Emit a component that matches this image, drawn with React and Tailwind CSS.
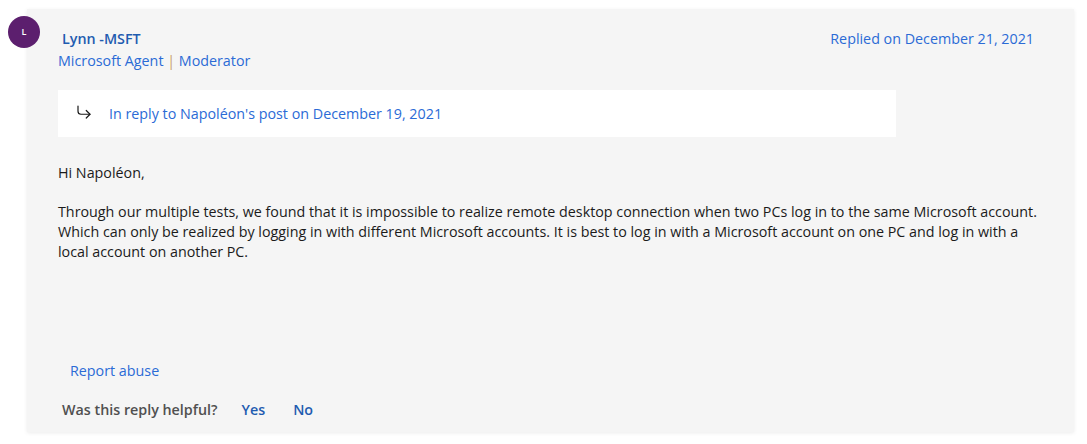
import { CornerDownRight } from 'lucide-react'

const font = { fontFamily: '"Open Sans", "Noto Sans", sans-serif' }

export default function App() {
  return (
    <div className="min-h-screen bg-white pl-[27px] pt-[9px] pr-[13px] pb-[10px]" style={font}>
      <div className="relative bg-[#f5f5f5] shadow-[0_1px_4px_rgba(0,0,0,0.08)] h-[423px] flex flex-col pl-[31px] pr-[8px]">
        {/* Avatar */}
        <div className="absolute left-[-19px] top-[7px] w-8 h-8 rounded-full bg-[#5c1f6e] flex items-center justify-center">
          <span className="text-white text-[9px] font-semibold">L</span>
        </div>

        {/* Header */}
        <div className="flex justify-between pt-[20px] pr-[32px] text-[14.3px] leading-[20px]">
          <div className="flex flex-col">
            <span className="text-[#1f5cb0] font-semibold pl-[4px]">Lynn -MSFT</span>
            <span className="text-[#2b6bd6] mt-[2px]">
              Microsoft Agent <span className="text-[#c8a26a]">|</span> Moderator
            </span>
          </div>
          <span className="text-[#2b6bd6]">Replied on December 21, 2021</span>
        </div>

        {/* In reply to */}
        <div className="mt-[19px] w-[838px] h-[47px] bg-white flex items-center gap-[16px] pl-[17px]">
          <CornerDownRight size={18} strokeWidth={1.6} className="text-[#1a1a1a] -mt-[3px]" />
          <span className="text-[#2b6bd6] text-[14.3px]">In reply to Napoléon's post on December 19, 2021</span>
        </div>

        {/* Body */}
        <div className="mt-[26px] text-[#1b1b1b] text-[14.3px] leading-[20px]">
          <p>Hi Napoléon,</p>
          <p className="mt-[19px]">
            Through our multiple tests, we found that it is impossible to realize remote desktop connection when two PCs log in to the same Microsoft account. Which can only be realized by logging in with different Microsoft accounts. It is best to log in with a Microsoft account on one PC and log in with a<br />
            local account on another PC.
          </p>
        </div>

        <div className="flex-1" />

        {/* Footer */}
        <div className="pl-[12px] text-[14.3px] leading-[20px]">
          <span className="text-[#2b6bd6]">Report abuse</span>
        </div>
        <div className="flex items-center mt-[19px] mb-[12px] pl-[4px] text-[14.3px] leading-[20px]">
          <span className="text-[#505050] font-semibold">Was this reply helpful?</span>
          <span className="text-[#1f5cb0] font-semibold ml-[24px]">Yes</span>
          <span className="text-[#1f5cb0] font-semibold ml-[28px]">No</span>
        </div>
      </div>
    </div>
  )
}
